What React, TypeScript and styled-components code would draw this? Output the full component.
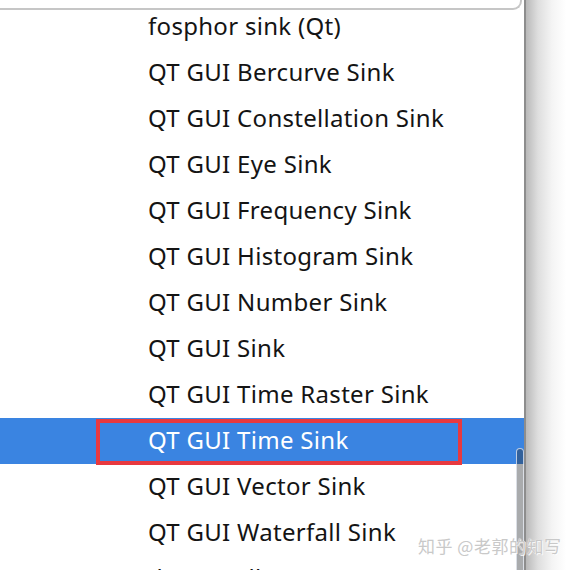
import React from 'react';
import styled, { createGlobalStyle } from 'styled-components';

const GlobalStyle = createGlobalStyle`
  html, body {
    margin: 0;
    padding: 0;
    background: #ffffff;
    overflow: hidden;
  }
  body {
    font-family: "Noto Sans", "Liberation Sans", sans-serif;
  }
`;

const Window = styled.div`
  position: relative;
  display: flex;
  width: 577px;
  height: 570px;
  overflow: hidden;
  background: #ffffff;
`;

const Panel = styled.div`
  position: relative;
  display: flex;
  flex-direction: column;
  width: 524px;
  flex-shrink: 0;
  background: #ffffff;
`;

const Divider = styled.div`
  width: 2px;
  flex-shrink: 0;
  background: #8d8d8d;
`;

const Shade = styled.div`
  flex: 1;
  background: linear-gradient(to right, #b9b9b9 0px, #dedede 12px, #f4f4f4 26px, #ffffff 40px);
`;

const SearchBox = styled.div`
  width: 520px;
  height: 8px;
  border-bottom: 2px solid #c6c6c6;
  border-right: 2px solid #c6c6c6;
  border-bottom-right-radius: 9px;
  margin-bottom: -6px;
  flex-shrink: 0;
`;

const List = styled.div`
  display: flex;
  flex-direction: column;
`;

const Row = styled.div<{ $selected?: boolean; $indent?: number }>`
  position: relative;
  display: flex;
  align-items: center;
  height: 46px;
  flex-shrink: 0;
  padding-left: ${(p) => p.$indent ?? 148}px;
  background: ${(p) => (p.$selected ? '#3a84e1' : 'transparent')};
  color: ${(p) => (p.$selected ? '#ffffff' : '#141414')};
  font-size: 24px;
  letter-spacing: 0.3px;
  white-space: nowrap;
`;

const Label = styled.span`
  line-height: 1;
  margin-top: -3px;
`;

const Marker = styled.div`
  position: absolute;
  left: 96px;
  top: 1px;
  width: 358px;
  height: 38px;
  border: 4px solid #e8393f;
`;

const Thumb = styled.div`
  position: absolute;
  left: 516px;
  top: 448px;
  width: 6px;
  height: 140px;
  border: 1px solid rgba(235, 240, 248, 0.75);
  border-bottom: none;
  border-radius: 4px 4px 0 0;
  background: rgba(40, 45, 50, 0.4);
`;

const Watermark = styled.div`
  position: absolute;
  left: 418px;
  top: 533px;
  font-family: "Noto Sans CJK SC", sans-serif;
  font-size: 17px;
  color: #c9c9c9;
  letter-spacing: 0.5px;
  text-shadow: 0 0 1px #ffffff, 1px 1px 0 rgba(255, 255, 255, 0.8);
  white-space: nowrap;
`;

const items = [
  'fosphor sink (Qt)',
  'QT GUI Bercurve Sink',
  'QT GUI Constellation Sink',
  'QT GUI Eye Sink',
  'QT GUI Frequency Sink',
  'QT GUI Histogram Sink',
  'QT GUI Number Sink',
  'QT GUI Sink',
  'QT GUI Time Raster Sink',
  'QT GUI Time Sink',
  'QT GUI Vector Sink',
  'QT GUI Waterfall Sink',
];

const App: React.FC = () => {
  const selected = 'QT GUI Time Sink';

  return (
    <>
      <GlobalStyle />
      <Window>
        <Panel>
          <SearchBox />
          <List>
            {items.map((name) => (
              <Row key={name} $selected={name === selected}>
                <Label>{name}</Label>
                {name === selected && <Marker />}
              </Row>
            ))}
            <Row $indent={104}>
              <Label>Level Controllers</Label>
            </Row>
          </List>
          <Thumb />
        </Panel>
        <Divider />
        <Shade />
        <Watermark>知乎 @老郭的知写</Watermark>
      </Window>
    </>
  );
};

export default App;
